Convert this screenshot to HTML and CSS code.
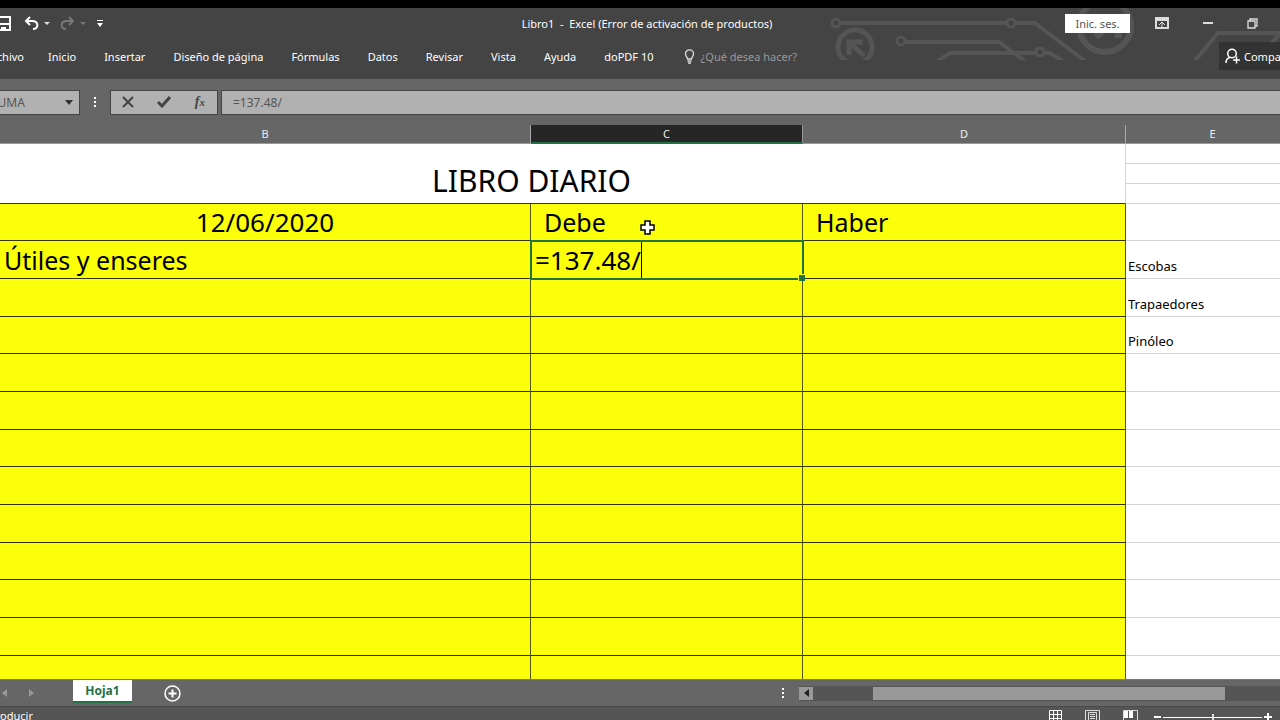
FILE: index.html
```
<!DOCTYPE html>
<html lang="es">
<head>
  <meta charset="UTF-8" />
  <meta name="viewport" content="width=device-width, initial-scale=1.0"/>
  <title>Libro1 - Excel</title>
  <link rel="stylesheet" href="styles.css">
</head>
<body>

<header class="top">
  <svg class="circuit" viewBox="0 0 460 52" width="460" height="52" aria-hidden="true">
    <g fill="none" stroke="#555" stroke-width="4">
      <circle cx="16" cy="15" r="4" stroke-width="3"/>
      <path d="M20 15h167M195 15h20L266 54"/>
      <circle cx="191" cy="15" r="4" stroke-width="3"/>
      <circle cx="81" cy="33" r="4" stroke-width="3"/>
      <path d="M85 34h94L206 54"/>
      <path d="M116 54l14-9h86M224 45h6l14 9"/>
      <circle cx="220" cy="44" r="4" stroke-width="3"/>
      <circle cx="35" cy="39" r="17" stroke-width="5"/>
      <path d="M29 47V34h14M30 35l14 13" stroke-width="5"/>
      <circle cx="285" cy="18" r="26" stroke-width="6"/>
      <path d="M298 30V14M276 29l20-18M272 10h26" stroke-width="7"/>
      <path d="M374 54l24-29h62M460 25l-12 15"/>
    </g>
  </svg>

  <div class="titlebar">
    <div class="quick">
      <button class="icon save" aria-label="Guardar">
        <svg width="15" height="15" viewBox="0 0 15 15" fill="none" stroke="#fff" stroke-width="2"><path d="M1 1h13v13H1zM2 8h12"/><path d="M5 11h5v3H5z" fill="#fff" stroke="none"/></svg>
      </button>
      <button class="icon undo" aria-label="Deshacer">
        <svg width="15" height="14" viewBox="0 0 15 14" fill="none" stroke="#fff" stroke-width="2"><path d="M6 1L2 5l4 4M2 5h6c7 0 7 8 1 8"/></svg>
      </button>
      <i class="caret"></i>
      <button class="icon redo" aria-label="Rehacer">
        <svg width="15" height="14" viewBox="0 0 15 14" fill="none" stroke="#777" stroke-width="2"><path d="M9 1l4 4-4 4M13 5H7c-7 0-7 8-1 8"/></svg>
      </button>
      <i class="caret dim"></i>
      <button class="icon more" aria-label="Personalizar">
        <svg width="6" height="7" viewBox="0 0 6 7" fill="#fff"><path d="M0 0h6v1H0zM0 3h6L3 7z"/></svg>
      </button>
    </div>
    <h1 class="title">Libro1&nbsp; -&nbsp; Excel (Error de activación de productos)</h1>
    <div class="window-buttons">
      <button class="sign-in">Inic. ses.</button>
      <button class="icon" aria-label="Opciones de la cinta">
        <svg width="14" height="12" viewBox="0 0 14 12" fill="none" stroke="#ddd"><path d="M1 1h12v10H1zM1 3h12" stroke-width="2"/><path d="M7 10V5M4 8l3-3 3 3"/></svg>
      </button>
      <button class="icon" aria-label="Minimizar">
        <svg width="10" height="10" viewBox="0 0 10 10" fill="#ddd"><path d="M0 4h10v2H0z"/></svg>
      </button>
      <button class="icon" aria-label="Restaurar">
        <svg width="11" height="11" viewBox="0 0 11 11" fill="none" stroke="#ddd" stroke-width="1.300"><path d="M1 3h7v7H1zM3 3V1h7v7H8"/></svg>
      </button>
    </div>
  </div>

  <nav class="ribbon">
    <a href="#" class="file"><span>Archivo</span></a>
    <a href="#">Inicio</a>
    <a href="#">Insertar</a>
    <a href="#">Diseño de página</a>
    <a href="#">Fórmulas</a>
    <a href="#">Datos</a>
    <a href="#">Revisar</a>
    <a href="#">Vista</a>
    <a href="#">Ayuda</a>
    <a href="#">doPDF 10</a>
    <a href="#" class="tell-me">
      <svg width="11" height="15" viewBox="0 0 10 15" fill="none" stroke="#ddd" stroke-width="1.300"><path d="M3 10C3 8 1 7.500 1 4.800a4 4 0 0 1 8 0C9 7.500 7 8 7 10z"/><path d="M3 12h4M3.500 14h3"/></svg>
      ¿Qué desea hacer?
    </a>
    <button class="share">
      <svg width="15" height="16" viewBox="0 0 15 16" fill="none" stroke="#fff" stroke-width="1.500"><circle cx="7" cy="5.500" r="4.300"/><path d="M1 15c0-3 1.500-5 4-5.500M8 12h7M11.500 8.500v7"/></svg>
      <span>Compartir</span>
    </button>
  </nav>
</header>

<section class="formula-bar">
  <div class="name-box">
    <input type="text" value="SUMA" aria-label="Cuadro de nombres">
    <i class="arrow"></i>
  </div>
  <i class="dots"></i>
  <div class="formula-buttons">
    <button class="icon" aria-label="Cancelar">
      <svg width="12" height="12" viewBox="0 0 12 12" fill="none" stroke="#444" stroke-width="2"><path d="M1 1l10 10M11 1L1 11"/></svg>
    </button>
    <button class="icon" aria-label="Introducir">
      <svg width="14" height="12" viewBox="0 0 14 12" fill="none" stroke="#444" stroke-width="3"><path d="M1 6l4 4 8-9"/></svg>
    </button>
    <button class="icon fx" aria-label="Insertar función">f<small>x</small></button>
  </div>
  <input class="formula" type="text" value="=137.48/" aria-label="Barra de fórmulas">
</section>

<main class="sheet">
  <table>
    <colgroup>
      <col class="col-b"><col class="col-c"><col class="col-d"><col>
    </colgroup>
    <thead>
      <tr><th>B</th><th class="current">C</th><th>D</th><th class="col-e">E</th></tr>
    </thead>
    <tbody class="heading">
      <tr><td class="book-title" colspan="3" rowspan="3">LIBRO DIARIO</td><td></td></tr>
      <tr><td></td></tr>
      <tr><td></td></tr>
    </tbody>
    <tbody class="entries">
      <tr><td class="date">12/06/2020</td><td class="label">Debe</td><td class="label">Haber</td><td></td></tr>
      <tr>
        <td>Útiles y enseres</td>
        <td class="editing"><div class="editor"><input type="text" value="=137.48/" aria-label="Celda en edición"><i class="cursor"></i></div></td>
        <td></td>
        <td>Escobas</td>
      </tr>
      <tr><td></td><td></td><td></td><td>Trapaedores</td></tr>
      <tr><td></td><td></td><td></td><td>Pinóleo</td></tr>
      <tr><td></td><td></td><td></td><td></td></tr>
      <tr><td></td><td></td><td></td><td></td></tr>
      <tr><td></td><td></td><td></td><td></td></tr>
      <tr><td></td><td></td><td></td><td></td></tr>
      <tr><td></td><td></td><td></td><td></td></tr>
      <tr><td></td><td></td><td></td><td></td></tr>
      <tr><td></td><td></td><td></td><td></td></tr>
      <tr><td></td><td></td><td></td><td></td></tr>
      <tr><td></td><td></td><td></td><td></td></tr>
    </tbody>
  </table>
  <svg class="pointer" width="15" height="15" viewBox="0 0 15 15"><path d="M5 1h5v4h4v5h-4v4H5v-4H1V5h4z" fill="#fff" stroke="#000" stroke-width="1.500"/></svg>
</main>

<footer>
  <div class="sheet-bar">
    <div class="sheet-nav"><i class="left"></i><i class="right"></i></div>
    <button class="sheet-tab">Hoja1</button>
    <button class="icon add" aria-label="Hoja nueva">
      <svg width="17" height="17" viewBox="0 0 17 17" fill="none" stroke="#fff"><circle cx="8.500" cy="8.500" r="7.500" stroke-width="1.500"/><path d="M8.500 4.500v8M4.500 8.500h8" stroke-width="2"/></svg>
    </button>
    <i class="dots"></i>
    <div class="scrollbar">
      <button class="icon" aria-label="Desplazar a la izquierda"><i class="left"></i></button>
      <div class="thumb"></div>
    </div>
  </div>
  <div class="status-bar">
    <div class="mode"><span>Introducir</span></div>
    <div class="views">
      <button class="icon" aria-label="Normal">
        <svg width="13" height="13" viewBox="0 0 13 13" fill="none" stroke="#fff"><path d="M.5.500h12v12H.500zM.5 4.500h12M.5 8.500h12M4.500.500v12M8.500.500v12"/></svg>
      </button>
      <button class="icon" aria-label="Diseño de página">
        <svg width="15" height="13" viewBox="0 0 15 13" fill="none" stroke="#ddd"><path d="M.5.500h14v12H.500zM3.500 2.500h8v10h-8zM5 4.500h5M5 6.500h5M5 8.500h5M5 10.500h5"/></svg>
      </button>
      <button class="icon" aria-label="Salto de página">
        <svg width="15" height="13" viewBox="0 0 15 13" fill="none" stroke="#ddd"><path d="M.5.500h14v12H.500z"/><path d="M1 1h4v7H1zM6 1h4v7H6z" fill="#fff" stroke="none"/></svg>
      </button>
    </div>
    <div class="zoom">
      <button class="icon" aria-label="Alejar"><svg width="7" height="8" viewBox="0 0 7 8" stroke="#fff" stroke-width="2"><path d="M0 4h7"/></svg></button>
      <input type="range" min="0" max="100" value="50" aria-label="Zoom">
      <button class="icon" aria-label="Acercar"><svg width="8" height="8" viewBox="0 0 8 8" stroke="#fff" stroke-width="2"><path d="M0 4h8M4 0v8"/></svg></button>
    </div>
  </div>
</footer>

</body>
</html>
```
FILE: styles.css
```
* { box-sizing: border-box; }
body {
  margin: 0;
  height: 100vh;
  display: flex;
  flex-direction: column;
  overflow: hidden;
  background: #666;
  border-top: 8px solid black;
  color: white;
  font-family: "Noto Sans", "Open Sans", sans-serif;
  font-size: 11px;
}
button, input { font: inherit; color: inherit; padding: 0; border: 0; background: none; }
a { color: inherit; text-decoration: none; }
svg { display: block; flex-shrink: 0; }
.icon { display: flex; align-items: center; justify-content: center; }

/* title bar and ribbon */
.top { position: relative; background: #444; height: 71px; flex-shrink: 0; }
.circuit { position: absolute; top: 0; right: 0; }
.titlebar {
  position: relative;
  height: 30px;
  padding-left: 14px;
  display: grid;
  grid-template-columns: 1fr auto 1fr;
  align-items: center;
}
.quick { display: flex; align-items: center; margin-left: -18px; }
.undo { margin-left: 13px; }
.redo { margin-left: 10px; }
.more { margin-left: 11px; }
.caret { border: 3px solid transparent; border-top-color: #ddd; border-bottom: 0; margin-left: 5px; }
.dim { border-top-color: #777; }
.title { margin: 0; font-size: 11px; font-weight: normal; }
.window-buttons { display: flex; align-items: center; justify-content: flex-end; gap: 34px; padding-right: 22px; }
.sign-in { background: white; color: #555; width: 65px; height: 19px; margin-right: -9px; }

.ribbon { position: relative; display: flex; align-items: center; gap: 28px; height: 38px; margin-top: -1px; white-space: nowrap; }
.file { width: 24px; margin-right: -4px; display: flex; justify-content: flex-end; overflow: hidden; }
.tell-me { display: flex; align-items: center; gap: 6px; color: #999; margin-left: 2px; }
.share { margin-left: auto; width: 61px; height: 28px; background: #333; display: flex; align-items: center; gap: 4px; padding-left: 6px; overflow: hidden; }

/* formula bar */
.formula-bar { display: flex; align-items: center; height: 46px; flex-shrink: 0; color: #555; font-size: 12px; }
.name-box, .formula-buttons, .formula { height: 25px; background: #b1b1b1; border: 1px solid #444; }
.name-box { width: 80px; border-left: 0; display: flex; align-items: center; overflow: hidden; }
.name-box input { width: 68px; margin-left: -9px; flex-shrink: 0; }
.arrow { border: 4px solid transparent; border-top: 5px solid #333; border-bottom: 0; margin-left: 6px; }
.dots { width: 2px; height: 10px; background: repeating-linear-gradient(#fff 0 2px, transparent 2px 4px); }
.formula-bar .dots { margin: 0 14px; }
.formula-buttons { width: 108px; display: flex; align-items: center; justify-content: space-between; padding: 0 12px 0 11px; }
.fx { font: italic bold 14px "Liberation Serif", serif; color: #444; align-items: baseline; }
.fx small { font-size: 11px; }
.formula { flex: 1; min-width: 0; margin-left: 3px; padding-left: 11px; border-right: 0; }

/* grid */
.sheet { position: relative; flex: 1; min-height: 0; overflow: hidden; background: white; }
table { width: 100%; table-layout: fixed; border-collapse: separate; border-spacing: 0; color: black; font-family: "Noto Sans", sans-serif; }
.col-b { width: 531px; }
.col-c { width: 272px; }
.col-d { width: 323px; }
th { height: 19px; padding: 0; background: #666; color: #eee; font-weight: normal; line-height: 16px; border-bottom: 1px solid #999; }
th.current { background: #262626; border-right: 1px solid #999; border-bottom: 2px solid #217346; }
th:first-child, th:nth-child(3) { border-right: 1px solid #aaa; }
.col-e { padding-left: 19px; }
td { padding: 0; white-space: nowrap; border-bottom: 1px solid #d4d4d4; }
.heading td { height: 20px; }
.heading .book-title {
  border-bottom-color: #333;
  border-right: 1px solid #d4d4d4;
  padding: 14px 62px 0 0;
  text-align: center;
  font-size: 30px;
  line-height: 44px;
}
.entries tr { height: 38px; }
.entries tr:nth-child(3n+1) { height: 37px; }
.entries td { font-size: 25px; line-height: 36px; }
.entries td:not(:last-child) {
  background: #fcff0a;
  border-bottom-color: #333300;
  border-right: 1px solid #555500;
  padding-left: 4px;
}
.entries td:last-child { font-size: 13px; line-height: 16px; vertical-align: bottom; padding: 0 0 4px 2px; }
.entries td.date { text-align: center; font-size: 26px; padding-left: 0; }
.entries td.label { padding-left: 13px; }
.entries td.editing { position: relative; font-size: 26px; outline: 2px solid #217346; outline-offset: -1px; }
.editing::after { content: ""; position: absolute; right: -3px; bottom: -3px; width: 6px; height: 6px; background: #217346; border: solid #fcff0a; border-width: 1px 0 0 1px; }
.editor { display: flex; align-items: center; height: 36px; }
.editor input { width: 106px; height: 36px; }
.cursor { width: 1px; height: 36px; background: #000080; }
.pointer { position: absolute; left: 640px; top: 95px; }

/* sheet tabs and status bar */
.sheet-bar { display: flex; align-items: center; height: 27px; background: #666; border-top: 1px solid #777; }
.left, .right { border: 4px solid transparent; border-left: 0; border-right: 5px solid #999; }
.right { border-right: 0; border-left: 5px solid #999; }
.sheet-nav { width: 73px; display: flex; gap: 22px; padding-left: 2px; }
.sheet-tab { align-self: flex-start; width: 59px; height: 23px; background: white; color: #217346; font-weight: bold; font-size: 12px; border-bottom: 2px solid #217346; }
.add { margin-left: 32px; }
.sheet-bar .dots { margin-left: auto; margin-right: 15px; }
.scrollbar { width: 481px; height: 15px; background: #555; display: flex; align-items: center; }
.scrollbar .icon { width: 14px; height: 13px; background: #999; }
.scrollbar .left { border-right-color: #222; }
.thumb { width: 352px; height: 13px; margin-left: 60px; background: #999; }
.status-bar { display: flex; height: 14px; background: #555; border-top: 1px solid #4a4a4a; overflow: hidden; }
.mode { width: 33px; display: flex; justify-content: flex-end; overflow: hidden; padding-top: 1px; flex-shrink: 0; }
.views { display: flex; align-items: flex-start; gap: 23px; margin-left: auto; padding-top: 3px; }
.zoom { display: flex; align-items: flex-start; gap: 2px; margin-left: 16px; padding: 6px 8px 0 0; }
.zoom input { appearance: none; width: 99px; height: 8px; margin: 0; background: linear-gradient(#fff, #fff) center / 100% 1px no-repeat; }
.zoom input::-webkit-slider-thumb { appearance: none; width: 2px; height: 6px; background: #ddd; }
```
